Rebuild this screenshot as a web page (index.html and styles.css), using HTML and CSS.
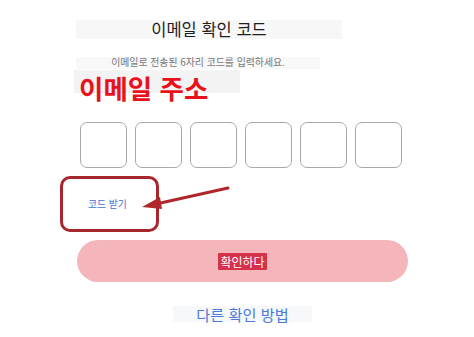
FILE: index.html
```html
<!DOCTYPE html>
<html lang="ko">
<head>
<meta charset="utf-8">
<link rel="stylesheet" href="styles.css">
</head>
<body>
<div class="page">
  <div class="title">이메일 확인 코드</div>
  <div class="subtitle">이메일로 전송된 6자리 코드를 입력하세요.</div>
  <div class="heading">이메일 주소</div>
  <div class="code-row">
    <div class="cell"></div>
    <div class="cell"></div>
    <div class="cell"></div>
    <div class="cell"></div>
    <div class="cell"></div>
    <div class="cell"></div>
  </div>
  <div class="resend"><span class="resend-text">코드 받기</span></div>
  <div class="confirm"><span class="confirm-label">확인하다</span></div>
  <div class="alt-row"><span class="alt">다른 확인 방법</span></div>
</div>
<div class="annot-box"></div>
<svg class="annot-arrow" width="474" height="337" viewBox="0 0 474 337">
  <line x1="228" y1="188" x2="156" y2="204" stroke="#b1262b" stroke-width="3" stroke-linecap="round"/>
  <polygon points="142,207 160,197 162,209" fill="#b1262b"/>
</svg>
</body>
</html>
```
FILE: styles.css
```css
html, body {
  margin: 0;
  padding: 0;
  background: #ffffff;
}
body {
  font-family: "Noto Sans CJK KR", "Noto Sans", sans-serif;
  position: relative;
  width: 474px;
  height: 337px;
  overflow: hidden;
}
.page {
  padding: 20px 0 0 76px;
}
.title {
  width: 266px;
  height: 19px;
  line-height: 19px;
  background: #f7f7f7;
  text-align: center;
  font-size: 16.5px;
  color: #1e1e1e;
}
.subtitle {
  margin-top: 18px;
  width: 244px;
  height: 12px;
  line-height: 11px;
  background: #f8f8f8;
  text-align: center;
  font-size: 9.9px;
  color: #777777;
}
.heading {
  margin-top: 1px;
  margin-left: -2px;
  width: 166px;
  height: 23px;
  line-height: 35px;
  background: #f3f3f3;
  font-size: 26.5px;
  font-weight: 700;
  color: #e8121b;
  padding-left: 5px;
  box-sizing: border-box;
  white-space: nowrap;
}
.code-row {
  margin-top: 29px;
  margin-left: 4px;
  display: flex;
  gap: 8px;
}
.cell {
  width: 45px;
  height: 44px;
  border: 1px solid #a9a9a9;
  border-radius: 7px;
}
.resend {
  margin-top: 27px;
  height: 12px;
  line-height: 12px;
  padding-left: 12px;
}
.resend-text {
  font-size: 9.8px;
  color: #3f6fd6;
}
.confirm {
  margin-top: 33px;
  margin-left: 1px;
  width: 331px;
  height: 42px;
  border-radius: 21px;
  background: #f4b6ba;
  display: flex;
  align-items: center;
  justify-content: center;
}
.confirm-label {
  background: #d6304a;
  color: #ffffff;
  font-size: 12px;
  line-height: 17px;
  padding: 0 2px;
  border-radius: 1px;
}
.alt-row {
  margin-top: 24px;
  width: 333px;
  display: flex;
  justify-content: center;
}
.alt {
  display: block;
  width: 139px;
  height: 16px;
  line-height: 16px;
  background: #f6f8fa;
  text-align: center;
  font-size: 15.2px;
  color: #4a78e0;
}
.annot-box {
  position: absolute;
  left: 60px;
  top: 176px;
  width: 93px;
  height: 50px;
  border: 3px solid #a8272c;
  border-radius: 10px;
}
.annot-arrow {
  position: absolute;
  left: 0;
  top: 0;
  pointer-events: none;
}
```
